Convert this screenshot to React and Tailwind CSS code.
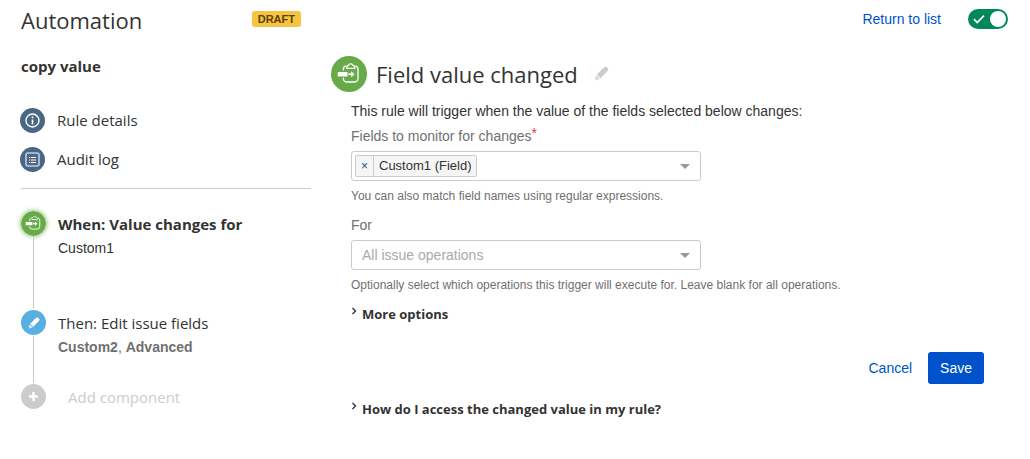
import React, { useState } from 'react';
import clsx from 'clsx';

const OPERATIONS = ['Create', 'Edit issue', 'Transition issue', 'Assign issue'];

const TriggerIcon = ({ className }) => (
  <svg viewBox="0 0 36 36" className={className} aria-hidden="true">
    <circle cx="18" cy="18" r="18" fill="#67ab49" />
    <g fill="none" stroke="#fff" strokeWidth="1.3">
      <path d="M12.4 14.4V13c0-1.600 1-2.900 2.700-3.200M24.300 9.800c1.700.3 2.700 1.600 2.700 3.200v9.400a3.600 3.600 0 0 1-3.600 3.600H16a3.600 3.600 0 0 1-3.600-3.600v-.6" />
      <path d="M15.600 12.300h8.200c0-1.700-.5-2.700-1.700-2.900-.3-1-1.200-1.600-2.400-1.600s-2.100.6-2.400 1.600c-1.200.2-1.700 1.200-1.700 2.900z" strokeWidth="1.200" />
      <path d="M17.200 18.200h4" strokeWidth="1.600" />
    </g>
    <path d="M6.800 15.900h9.700v4.600H6.800zM20.200 15.200l3.500 3-3.500 3z" fill="#fff" />
  </svg>
);

const Pencil = ({ className }) => (
  <svg viewBox="0 0 16 16" className={className} fill="currentColor" aria-hidden="true">
    <path d="M3 9L10.300 1.800c1.300-1.300 2.900-1.300 4 0 1.200 1.100 1.200 2.600 0 3.800L7 13z" />
    <path d="M2.400 9.700L6.300 13.600 3.400 15c-1.600.6-2.600-.3-2.200-1.900z" opacity="0.75" />
  </svg>
);

const InfoIcon = () => (
  <svg viewBox="0 0 25 25" className="size-[25px] shrink-0" aria-hidden="true">
    <circle cx="12.5" cy="12.5" r="12.5" fill="#4a6785" />
    <circle cx="12.5" cy="12.5" r="6.5" fill="none" stroke="#fff" strokeWidth="1.4" />
    <path d="M12.5 11.5v5M12.5 8.6v1.6" stroke="#fff" strokeWidth="1.6" />
  </svg>
);

const LogIcon = () => (
  <svg viewBox="0 0 25 25" className="size-[25px] shrink-0" aria-hidden="true">
    <circle cx="12.5" cy="12.5" r="12.5" fill="#4a6785" />
    <rect x="6" y="6" width="13" height="13" rx="2" fill="none" stroke="#c3cdd8" strokeWidth="1.6" />
    <path d="M9 10.5h1.2M9 13h1.2M9 15.5h1.2M11 10.5h5M11 13h5M11 15.5h5" stroke="#fff" strokeWidth="1.1" />
  </svg>
);

const Caret = () => (
  <svg viewBox="0 0 10 5" className="w-[10px] h-[5px]" aria-hidden="true">
    <path d="M0 0h10L5 5z" fill="#999" />
  </svg>
);

const Expander = ({ title }) => {
  const [open, setOpen] = useState(false);

  return (
    <button
      type="button"
      aria-expanded={open}
      onClick={() => setOpen(!open)}
      className="flex items-start gap-[5px] font-['Open_Sans',sans-serif] font-bold text-[13px] leading-5 text-left"
    >
      <svg viewBox="0 0 6 8" className={clsx('w-[6px] h-2 mt-[3px]', open && 'rotate-90')} aria-hidden="true">
        <path d="M1.5 1l3 3-3 3" fill="none" stroke="#333" strokeWidth="1.4" />
      </svg>
      {title}
    </button>
  );
};

const Sidebar = () => (
  <aside className="w-[290px] shrink-0">
    <div className="flex justify-between items-start pr-[10px]">
      <h1 className="font-['Open_Sans',sans-serif] text-[22px] leading-8 mt-1">Automation</h1>
      <span className="mt-[11px] px-[6px] h-4 rounded-[3px] bg-[#f6c342] text-[#594300] text-[11px] leading-4 font-bold">
        DRAFT
      </span>
    </div>
    <h2 className="mt-5 font-['Open_Sans',sans-serif] font-bold text-[15px] leading-5">copy value</h2>

    <nav className="mt-8 pb-4 flex flex-col gap-[14px] border-b border-[#ccc] font-['Open_Sans',sans-serif] text-[15px] leading-[25px]">
      <a href="#details" className="flex gap-3 -ml-px">
        <InfoIcon />
        Rule details
      </a>
      <a href="#audit-log" className="flex gap-3 -ml-px">
        <LogIcon />
        Audit log
      </a>
    </nav>

    <ol className="mt-[22px]">
      <li className="flex gap-3 min-h-[99px]">
        <div className="flex flex-col items-center">
          <TriggerIcon className="size-[25px] rounded-full shadow-[0_0_5px_#67ab49]" />
          <span className="w-px flex-1 my-px bg-[#ccc]" />
        </div>
        <div>
          <h3 className="font-['Open_Sans',sans-serif] font-bold text-[15px] leading-[27px]">
            When: Value changes for
          </h3>
          <p className="leading-5">Custom1</p>
        </div>
      </li>
      <li className="flex gap-3 min-h-[74px]">
        <div className="flex flex-col items-center">
          <span className="size-[25px] rounded-full bg-[#59afe1] text-white flex items-center justify-center">
            <Pencil className="size-3" />
          </span>
          <span className="w-px flex-1 my-px bg-[#ccc]" />
        </div>
        <div>
          <h3 className="font-['Open_Sans',sans-serif] text-[15px] leading-[27px]">Then: Edit issue fields</h3>
          <p className="leading-5 text-[#707070]">
            <b>Custom2</b>, <b>Advanced</b>
          </p>
        </div>
      </li>
      <li>
        <button
          type="button"
          className="flex gap-[22px] text-[#ccc] font-['Open_Sans',sans-serif] text-[15px] leading-[27px]"
        >
          <svg viewBox="0 0 25 25" className="size-[25px]" aria-hidden="true">
            <circle cx="12.5" cy="12.5" r="12.5" fill="#ccc" />
            <path d="M12.5 9v7M9 12.5h7" stroke="#fff" strokeWidth="2.6" strokeLinecap="round" />
          </svg>
          Add component
        </button>
      </li>
    </ol>
  </aside>
);

const App = () => {
  const [enabled, setEnabled] = useState(true);
  const [fields, setFields] = useState(['Custom1 (Field)']);
  const [operation, setOperation] = useState('');

  return (
    <div className="min-h-screen bg-white flex gap-5 pl-[21px] pr-[22px] font-['Liberation_Sans',Arial,sans-serif] text-[14px] leading-5 text-[#333]">
      <Sidebar />

      <main className="flex-1 min-w-0">
        <div className="mt-[9px] flex justify-end items-center gap-[27px]">
          <a href="#list" className="text-[#0052cc] hover:underline">
            Return to list
          </a>
          <label className="cursor-pointer">
            <input
              type="checkbox"
              aria-label="Rule enabled"
              className="peer sr-only"
              checked={enabled}
              onChange={(e) => setEnabled(e.target.checked)}
            />
            <span
              className={clsx(
                'flex items-center w-10 h-5 rounded-full px-[2px]',
                enabled ? 'bg-[#00875a] justify-between' : 'bg-[#7a869a] justify-start'
              )}
            >
              {enabled && (
                <svg viewBox="0 0 12 10" className="w-3 h-[10px] ml-[3px]" aria-hidden="true">
                  <path d="M1 5.2L4.2 8.6 11 1.6" fill="none" stroke="#fff" strokeWidth="1.7" />
                </svg>
              )}
              <span className="size-4 rounded-full bg-white" />
            </span>
          </label>
        </div>

        <div className="mt-[26px] flex items-center">
          <TriggerIcon className="size-9 shrink-0" />
          <h2 className="ml-[9px] pt-px font-['Open_Sans',sans-serif] text-[22px] leading-9">Field value changed</h2>
          <button type="button" aria-label="Rename" className="ml-4 text-[#ccc]">
            <Pencil className="size-[15px]" />
          </button>
        </div>

        <form className="ml-5 mt-[9px]" onSubmit={(e) => e.preventDefault()}>
          <p>This rule will trigger when the value of the fields selected below changes:</p>

          <label htmlFor="fields" className="mt-1 flex items-start text-[#707070]">
            <span className="pt-px">Fields to monitor for changes</span>
            <span className="text-[#d04437] leading-4">*</span>
          </label>
          <div className="mt-[5px] max-w-[350px] h-[30px] flex items-center border border-[#ccc] rounded-[3px] pl-[3px] pr-[10px]">
            {fields.map((field) => (
              <span
                key={field}
                className="shrink-0 flex h-[22px] border border-[#ccc] rounded-[2px] bg-[#f5f5f5] leading-5 mr-1"
              >
                <button
                  type="button"
                  aria-label={`Remove ${field}`}
                  onClick={() => setFields(fields.filter((f) => f !== field))}
                  className="w-[18px] border-r border-[#ccc] text-[12px] leading-5 text-[#205081]"
                >
                  ×
                </button>
                <span className="px-[5px] text-[13px]">{field}</span>
              </span>
            ))}
            <input id="fields" type="text" className="flex-1 min-w-0 outline-none" />
            <Caret />
          </div>
          <p className="mt-[5px] text-[12px] text-[#707070]">
            You can also match field names using regular expressions.
          </p>

          <label htmlFor="operations" className="mt-[9px] block text-[#707070]">
            For
          </label>
          <div className="mt-[5px] max-w-[350px] grid items-center">
            <select
              id="operations"
              value={operation}
              onChange={(e) => setOperation(e.target.value)}
              className="col-start-1 row-start-1 appearance-none w-full h-[30px] border border-[#ccc] rounded-[3px] bg-white pl-[10px] pr-8 text-[#aaa]"
            >
              <option value="">All issue operations</option>
              {OPERATIONS.map((name) => (
                <option key={name}>{name}</option>
              ))}
            </select>
            <span className="col-start-1 row-start-1 justify-self-end mr-[11px] pointer-events-none">
              <Caret />
            </span>
          </div>
          <p className="mt-[5px] text-[12px] text-[#707070]">
            Optionally select which operations this trigger will execute for. Leave blank for all operations.
          </p>

          <div className="mt-[9px]">
            <Expander title="More options" />
          </div>

          <div className="mt-7 mr-6 flex justify-end">
            <button type="button" className="h-8 px-4 text-[#0052cc]">
              Cancel
            </button>
            <button type="submit" className="h-8 px-3 rounded-[3px] bg-[#0052cc] text-white">
              Save
            </button>
          </div>

          <div className="mt-[15px]">
            <Expander title="How do I access the changed value in my rule?" />
          </div>
        </form>
      </main>
    </div>
  );
};

export default App;
